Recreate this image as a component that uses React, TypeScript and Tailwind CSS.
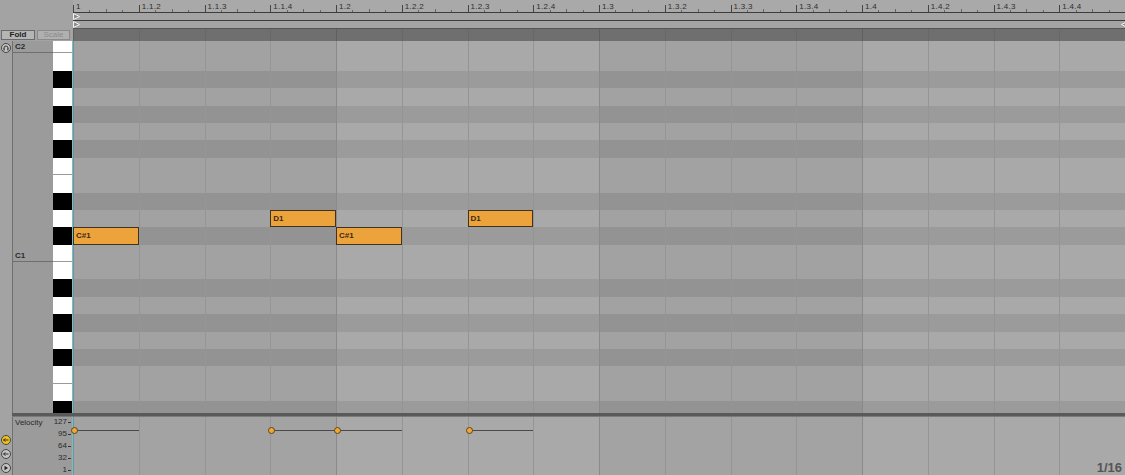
import React from "react";

// rows from C2 (top, partly hidden) down to D#0
const ROWS = [
  "C2", "B1", "A#1", "A1", "G#1", "G1", "F#1", "F1", "E1", "D#1", "D1", "C#1",
  "C1", "B0", "A#0", "A0", "G#0", "G0", "F#0", "F0", "E0", "D#0",
];
const isBlack = (n: string) => n.includes("#");

const RULER = [
  "1", "1.1.2", "1.1.3", "1.1.4", "1.2", "1.2.2", "1.2.3", "1.2.4",
  "1.3", "1.3.2", "1.3.3", "1.3.4", "1.4", "1.4.2", "1.4.3", "1.4.4",
];

const STEP = 65.75;
const ROW_H = 17.4;

const NOTES = [
  { name: "C#1", step: 0, row: 11 },
  { name: "D1", step: 3, row: 10 },
  { name: "C#1", step: 4, row: 11 },
  { name: "D1", step: 6, row: 10 },
];

function Columns({ band }: { band?: boolean }) {
  return (
    <div className="absolute inset-0 flex">
      {RULER.map((_, i) => {
        const beat = Math.floor(i / 4);
        const light = beat % 2 === 1;
        const beatStart = i % 4 === 0;
        return (
          <div
            key={i}
            className={`flex-1 border-l ${
              band
                ? beatStart
                  ? "border-[#5f5f5f]"
                  : "border-[#686868]"
                : beatStart
                ? "border-[#8a8a8a]"
                : "border-[#959595]"
            } ${!band && light ? "bg-white/[0.07]" : ""}`}
          />
        );
      })}
    </div>
  );
}

function Triangle({ flip }: { flip?: boolean }) {
  return (
    <svg width="7" height="7" viewBox="0 0 7 7" className={flip ? "rotate-180" : ""}>
      <path d="M0.5 0.5 L6.5 3.5 L0.5 6.5 Z" fill="#8c8c8c" stroke="#f4f4f4" strokeWidth="1" />
    </svg>
  );
}

function RoundBtn({ yellow, children }: { yellow?: boolean; children: React.ReactNode }) {
  return (
    <div
      className={`w-[10px] h-[10px] rounded-full border border-[#444] flex items-center justify-center ${
        yellow ? "bg-[#f2c21b]" : "bg-[#c4c4c4]"
      }`}
    >
      {children}
    </div>
  );
}

export default function App() {
  return (
    <div className="w-[1125px] h-[475px] flex flex-col bg-[#a3a3a3] overflow-hidden font-['Liberation_Sans',Arial,sans-serif] select-none">
      {/* header */}
      <div className="flex h-[41px] shrink-0">
        <div className="w-[73px] shrink-0 flex flex-col justify-end pb-[1px] pl-[1px] bg-[#a3a3a3]">
          <div className="flex gap-[2px]">
            <div className="w-[34px] h-[10px] bg-[#b5b5b5] border border-[#6a6a6a] text-[8px] leading-[8px] font-bold text-[#222] text-center">
              Fold
            </div>
            <div className="w-[33px] h-[10px] bg-[#b0b0b0] border border-[#8a8a8a] text-[8px] leading-[8px] text-[#8a8a8a] text-center">
              Scale
            </div>
          </div>
        </div>
        <div className="flex-1 flex flex-col">
          {/* ruler */}
          <div className="h-[12px] flex bg-[#a9a9a9]">
            {RULER.map((label, i) => (
              <div key={i} className="flex-1 relative">
                <div className="absolute left-0 top-[5px] w-px h-[7px] bg-[#444]" />
                <div className="absolute left-[25%] bottom-0 w-px h-[2px] bg-[#666]" />
                <div className="absolute left-[50%] bottom-0 w-px h-[3px] bg-[#666]" />
                <div className="absolute left-[75%] bottom-0 w-px h-[2px] bg-[#666]" />
                <span className="absolute left-[3px] top-[3px] text-[8px] leading-[8px] text-[#2e2e2e] tracking-[0.3px]">
                  {label}
                </span>
              </div>
            ))}
          </div>
          <div className="h-px bg-[#3c3c3c]" />
          <div className="h-[7px] bg-[#a4a4a4] flex items-center">
            <Triangle />
          </div>
          <div className="h-px bg-[#3c3c3c]" />
          <div className="h-[7px] bg-[#a4a4a4] flex items-center justify-between">
            <Triangle />
            <div className="-mr-[3px]">
              <Triangle flip />
            </div>
          </div>
          <div className="h-px bg-[#555]" />
          <div className="flex-1 bg-[#6f6f6f] relative">
            <Columns band />
          </div>
        </div>
      </div>

      {/* note editor */}
      <div className="flex h-[372px] shrink-0">
        <div className="w-[12px] shrink-0 bg-[#a3a3a3] flex flex-col items-center pt-[2px]">
          <RoundBtn>
            <svg width="6" height="6" viewBox="0 0 6 6">
              <path d="M1 4 V3 A2 2 0 0 1 5 3 V4" fill="none" stroke="#333" strokeWidth="1" />
              <rect x="0.5" y="3.5" width="1.2" height="2" fill="#333" />
              <rect x="4.3" y="3.5" width="1.2" height="2" fill="#333" />
            </svg>
          </RoundBtn>
        </div>
        <div className="w-[41px] shrink-0 bg-[#9b9b9b] border-l border-[#707070] overflow-hidden">
          <div className="-mt-[5px] flex flex-col">
            {ROWS.map((n) => {
              const isC = n === "C2" || n === "C1";
              return (
                <div
                  key={n}
                  style={{ height: ROW_H }}
                  className={`shrink-0 flex items-end pl-[2px] pb-[1px] ${isC ? "border-b border-[#6f6f6f]" : ""}`}
                >
                  {isC && (
                    <span className="text-[8px] leading-[8px] font-bold text-[#2a2a2a]">{n}</span>
                  )}
                </div>
              );
            })}
          </div>
        </div>
        <div className="w-[20px] shrink-0 border-r border-[#63c6d0] overflow-hidden bg-white">
          <div className="-mt-[5px] flex flex-col">
            {ROWS.map((n) => {
              const sep = n.startsWith("C") && !isBlack(n) ? true : n === "F1" || n === "F0";
              return (
                <div
                  key={n}
                  style={{ height: ROW_H }}
                  className={`shrink-0 ${isBlack(n) ? "bg-black" : "bg-white"} ${
                    sep ? "border-b border-[#9a9a9a]" : ""
                  }`}
                />
              );
            })}
          </div>
        </div>
        <div className="flex-1 relative overflow-hidden">
          <div className="-mt-[5px] flex flex-col">
            {ROWS.map((n) => (
              <div
                key={n}
                style={{ height: ROW_H }}
                className={`shrink-0 ${isBlack(n) ? "bg-[#939393]" : "bg-[#a2a2a2]"}`}
              />
            ))}
          </div>
          <Columns />
          {NOTES.map((note, i) => (
            <div
              key={i}
              style={{ left: note.step * STEP, top: note.row * ROW_H - 5, width: STEP, height: ROW_H }}
              className="absolute bg-[#eca33c] border border-[#3f3320] flex items-center pl-[2px]"
            >
              <span className="text-[8px] leading-[8px] font-bold text-[#3a2a12]">{note.name}</span>
            </div>
          ))}
        </div>
      </div>

      {/* separator */}
      <div className="flex h-[4px] shrink-0">
        <div className="w-[12px] bg-[#a3a3a3]" />
        <div className="flex-1 bg-[#5a5a5a] border-b border-[#7a7a7a]" />
      </div>

      {/* velocity lane */}
      <div className="flex flex-1">
        <div className="w-[12px] shrink-0 bg-[#a3a3a3] flex flex-col items-center pt-[18px] gap-[4px]">
          <RoundBtn yellow>
            <svg width="6" height="6" viewBox="0 0 6 6">
              <path d="M0.5 3 H5.5 M0.5 3 L2.5 1.5 M0.5 3 L2.5 4.5" stroke="#333" strokeWidth="1" fill="none" />
            </svg>
          </RoundBtn>
          <RoundBtn>
            <svg width="6" height="6" viewBox="0 0 6 6">
              <path d="M0.5 3 H5.5 M0.5 3 L2.5 1.5 M0.5 3 L2.5 4.5" stroke="#333" strokeWidth="1" fill="none" />
            </svg>
          </RoundBtn>
          <RoundBtn>
            <svg width="6" height="6" viewBox="0 0 6 6">
              <path d="M1.5 0.8 L5 3 L1.5 5.2 Z" fill="#222" />
            </svg>
          </RoundBtn>
        </div>
        <div className="w-[41px] shrink-0 bg-[#9b9b9b] border-l border-[#707070] pl-[2px] pt-[2px] text-[8px] leading-[8px] text-[#2a2a2a]">
          Velocity
        </div>
        <div className="w-[20px] shrink-0 bg-[#9b9b9b] border-r border-[#63c6d0] flex flex-col justify-between items-end py-[1px] pr-[1px]">
          {["127", "95", "64", "32", "1"].map((v) => (
            <div key={v} className="flex items-center gap-[1px]">
              <span className="text-[8px] leading-[8px] text-[#2a2a2a]">{v}</span>
              <div className="w-[3px] h-px bg-[#333]" />
            </div>
          ))}
        </div>
        <div className="flex-1 relative bg-[#a3a3a3]">
          <Columns />
          {NOTES.map((note, i) => (
            <React.Fragment key={i}>
              <div
                style={{ left: note.step * STEP + 1, width: STEP - 1 }}
                className="absolute top-[13px] h-px bg-[#4a4a4a]"
              />
              <div
                style={{ left: note.step * STEP - 2 }}
                className="absolute top-[10px] w-[7px] h-[7px] rounded-full bg-[#f0a830] border border-[#5a4320]"
              />
            </React.Fragment>
          ))}
          <span className="absolute right-[3px] bottom-[1px] text-[13px] leading-[13px] font-bold text-[#555]">
            1/16
          </span>
        </div>
      </div>
    </div>
  );
}
